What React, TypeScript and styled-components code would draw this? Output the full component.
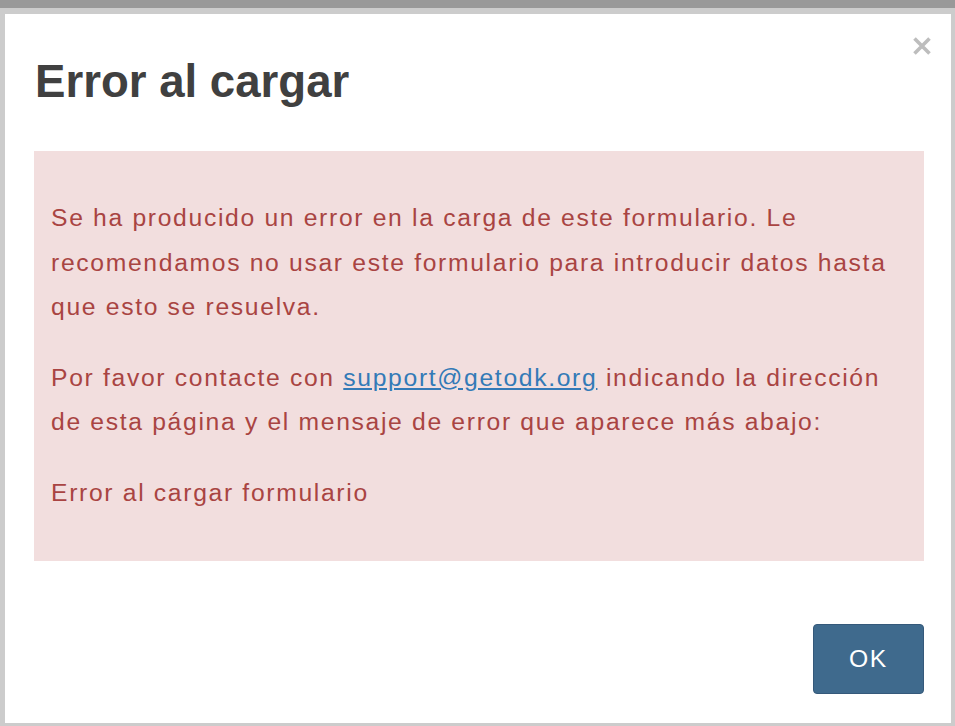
import * as React from "react";
import styled, { createGlobalStyle } from "styled-components";

const GlobalStyle = createGlobalStyle`
  html, body {
    margin: 0;
    padding: 0;
    background: #cccccc;
  }

  body {
    font-family: "Liberation Sans", Arial, sans-serif;
  }
`;

const Backdrop = styled.div`
  min-height: 726px;
  background: #cccccc;
  border-top: 8px solid #999999;
  padding: 6px 4px 3px 5px;
  box-sizing: border-box;
`;

const Modal = styled.div`
  position: relative;
  background: #ffffff;
  padding: 43px 27px 29px 29px;
`;

const CloseButton = styled.button`
  position: absolute;
  top: 20px;
  right: 17px;
  width: 24px;
  height: 24px;
  padding: 0;
  border: 0;
  background: none;
  display: flex;
  align-items: center;
  justify-content: center;
  cursor: pointer;
`;

const Title = styled.h1`
  margin: 0;
  padding-left: 1px;
  font-size: 45.6px;
  line-height: 50px;
  font-weight: 700;
  color: #404040;
`;

const Alert = styled.div`
  margin-top: 44px;
  background: #f2dede;
  color: #a94442;
  padding: 45px 17px 46px 17px;
  font-size: 24.7px;
  line-height: 44.5px;
  letter-spacing: 1.67px;
`;

const Paragraph = styled.p`
  margin: 0 0 26px;

  &:last-child {
    margin-bottom: 0;
  }
`;

const MailLink = styled.a`
  color: #337ab7;
  text-decoration: underline;
`;

const Footer = styled.div`
  display: flex;
  justify-content: flex-end;
  margin-top: 63px;
`;

const OkButton = styled.button`
  width: 111px;
  height: 70px;
  border: 1px solid #35597a;
  border-radius: 4px;
  background: #3f6a8d;
  color: #ffffff;
  font-family: "Liberation Sans", Arial, sans-serif;
  font-size: 24.7px;
  letter-spacing: 1.6px;
  cursor: pointer;
`;

function CloseIcon() {
  return (
    <svg width="20" height="20" viewBox="0 0 20 20">
      <path
        d="M2.5 2.5 L17.5 17.5 M17.5 2.5 L2.5 17.5"
        stroke="#bdbdbd"
        strokeWidth="3.6"
        strokeLinecap="butt"
        fill="none"
      />
    </svg>
  );
}

export default function App() {
  return (
    <>
      <GlobalStyle />
      <Backdrop>
        <Modal>
          <CloseButton aria-label="Cerrar">
            <CloseIcon />
          </CloseButton>
          <Title>Error al cargar</Title>
          <Alert>
            <Paragraph>
              Se ha producido un error en la carga de este formulario. Le
              recomendamos no usar este formulario para introducir datos hasta
              que esto se resuelva.
            </Paragraph>
            <Paragraph>
              Por favor contacte con{" "}
              <MailLink href="mailto:support@getodk.org">support@getodk.org</MailLink>{" "}
              indicando la dirección de esta página y el mensaje de error que
              aparece más abajo:
            </Paragraph>
            <Paragraph>Error al cargar formulario</Paragraph>
          </Alert>
          <Footer>
            <OkButton>OK</OkButton>
          </Footer>
        </Modal>
      </Backdrop>
    </>
  );
}
